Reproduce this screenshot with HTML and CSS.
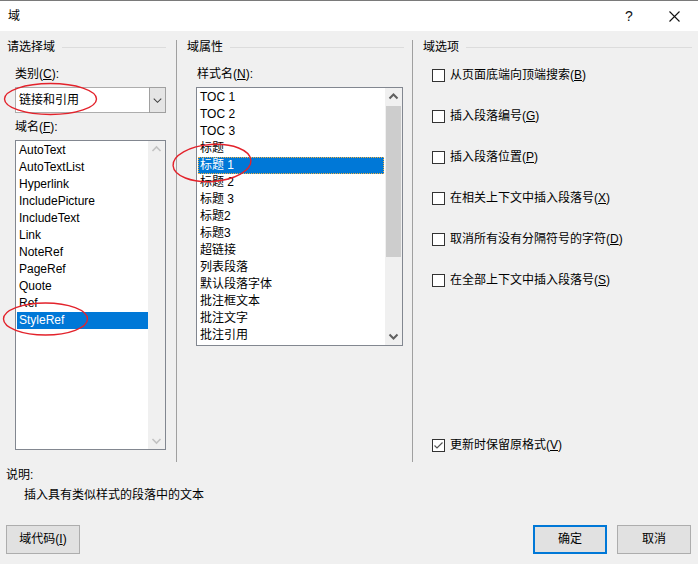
FILE: index.html
```html
<!DOCTYPE html>
<html lang="zh-CN">
<head>
<meta charset="utf-8">
<title>域</title>
<link rel="stylesheet" href="styles.css">
</head>
<body>
<div class="window">
  <div class="titlebar">
    <span class="title">域</span>
    <span class="help">?</span>
    <svg class="close" width="11" height="11" viewBox="0 0 11 11"><path d="M0.5 0.5 L10.5 10.5 M10.5 0.5 L0.5 10.5" stroke="#111" stroke-width="1.1" fill="none"/></svg>
  </div>

  <div class="main">
    <section class="col col-left">
      <div class="group-head"><span>请选择域</span><i class="rule"></i></div>
      <div class="inner-left">
        <div class="label first">类别(<u>C</u>):</div>
        <div class="combo">
          <span class="combo-text">链接和引用</span>
          <span class="combo-btn"><svg width="16" height="24" viewBox="0 0 16 24"><polyline points="4,10.5 8,14.5 12,10.5" fill="none" stroke="#404040" stroke-width="1.1"/></svg></span>
        </div>
        <div class="label second">域名(<u>F</u>):</div>
        <div class="listbox list-left">
          <div class="items">
            <div class="item">AutoText</div>
            <div class="item">AutoTextList</div>
            <div class="item">Hyperlink</div>
            <div class="item">IncludePicture</div>
            <div class="item">IncludeText</div>
            <div class="item">Link</div>
            <div class="item">NoteRef</div>
            <div class="item">PageRef</div>
            <div class="item">Quote</div>
            <div class="item">Ref</div>
            <div class="item selected">StyleRef</div>
          </div>
          <div class="scrollbar disabled">
            <span class="sb-btn"><svg width="17" height="17" viewBox="0 0 17 17"><polyline points="4.5,10 8.5,6 12.5,10" fill="none" stroke="#c2c2c2" stroke-width="1.6"/></svg></span>
            <span class="sb-track"></span>
            <span class="sb-btn"><svg width="17" height="17" viewBox="0 0 17 17"><polyline points="4.5,7 8.5,11 12.5,7" fill="none" stroke="#c2c2c2" stroke-width="1.6"/></svg></span>
          </div>
        </div>
      </div>
    </section>

    <section class="col col-mid">
      <div class="group-head"><span>域属性</span><i class="rule"></i></div>
      <div class="label first mid-label">样式名(<u>N</u>):</div>
      <div class="listbox list-mid">
        <div class="items">
          <div class="item">TOC 1</div>
          <div class="item">TOC 2</div>
          <div class="item">TOC 3</div>
          <div class="item">标题</div>
          <div class="item selected focus">标题 1</div>
          <div class="item">标题 2</div>
          <div class="item">标题 3</div>
          <div class="item">标题2</div>
          <div class="item">标题3</div>
          <div class="item">超链接</div>
          <div class="item">列表段落</div>
          <div class="item">默认段落字体</div>
          <div class="item">批注框文本</div>
          <div class="item">批注文字</div>
          <div class="item">批注引用</div>
        </div>
        <div class="scrollbar">
          <span class="sb-btn"><svg width="17" height="17" viewBox="0 0 17 17"><polyline points="4.5,10.5 8.5,6.5 12.5,10.5" fill="none" stroke="#606060" stroke-width="2"/></svg></span>
          <span class="sb-track"><span class="sb-thumb"></span></span>
          <span class="sb-btn"><svg width="17" height="17" viewBox="0 0 17 17"><polyline points="4.5,6.5 8.5,10.5 12.5,6.5" fill="none" stroke="#606060" stroke-width="2"/></svg></span>
        </div>
      </div>
    </section>

    <section class="col col-right">
      <div class="group-head"><span>域选项</span><i class="rule"></i></div>
      <div class="check first-check"><span class="box"></span><span>从页面底端向顶端搜索(<u>B</u>)</span></div>
      <div class="check"><span class="box"></span><span>插入段落编号(<u>G</u>)</span></div>
      <div class="check"><span class="box"></span><span>插入段落位置(<u>P</u>)</span></div>
      <div class="check"><span class="box"></span><span>在相关上下文中插入段落号(<u>X</u>)</span></div>
      <div class="check"><span class="box"></span><span>取消所有没有分隔符号的字符(<u>D</u>)</span></div>
      <div class="check"><span class="box"></span><span>在全部上下文中插入段落号(<u>S</u>)</span></div>
      <div class="check last-check"><span class="box checked"><svg width="11" height="11" viewBox="0 0 11 11"><polyline points="1.5,5.5 4,8 9.5,2.5" fill="none" stroke="#555" stroke-width="1.2"/></svg></span><span>更新时保留原格式(<u>V</u>)</span></div>
    </section>
  </div>

  <div class="desc">
    <div class="desc-title">说明:</div>
    <div class="desc-text">插入具有类似样式的段落中的文本</div>
  </div>

  <div class="buttons">
    <button class="btn">域代码(<u>I</u>)</button>
    <span class="spacer"></span>
    <button class="btn default">确定</button>
    <button class="btn">取消</button>
  </div>

  <svg class="marks" width="698" height="564" viewBox="0 0 698 564">
    <ellipse cx="50.5" cy="99" rx="46" ry="15.5" fill="none" stroke="#e3222b" stroke-width="1.4"/>
    <ellipse cx="45.5" cy="319" rx="42" ry="16" fill="none" stroke="#e3222b" stroke-width="1.4"/>
    <ellipse cx="212" cy="163" rx="39" ry="18.5" fill="none" stroke="#e3222b" stroke-width="1.4" transform="rotate(-4 212 163)"/>
  </svg>
</div>
</body>
</html>
```

FILE: styles.css
```css
* { box-sizing: border-box; }
html, body { margin: 0; padding: 0; background: #f0f0f0; }
body { overflow: hidden; }

.window {
  position: relative;
  width: 698px;
  height: 564px;
  background: #f0f0f0;
  color: #000;
  font-family: "Liberation Sans", "Noto Sans CJK SC", sans-serif;
  font-size: 12px;
  line-height: 17px;
}

.titlebar {
  height: 31px;
  background: #fff;
  border-top: 1px solid #7a7a7a;
  display: flex;
  align-items: center;
}
.title { margin-left: 8px; flex: 1; font-size: 12px; }
.help { width: 14px; text-align: center; font-size: 14px; margin-right: 33px; color: #111; }
.close { margin-right: 18px; }

.main {
  margin-top: 9px;
  height: 422px;
  display: grid;
  grid-template-columns: 176px 236px 286px;
}
.col { display: flex; flex-direction: column; }
.col-mid, .col-right { border-left: 1px solid #a0a0a0; }
.col-left { padding: 0 10px 0 7px; }
.col-mid { padding: 0 8px 0 10px; }
.col-right { padding: 0 6px 8px 10px; }

.group-head {
  height: 14px;
  line-height: 14px;
  display: flex;
  align-items: center;
  gap: 7px;
}
.rule { flex: 1; height: 1px; background: #dcdcdc; }

.inner-left { padding-left: 8px; }
.label.first { margin-top: 12px; }
.label.second { margin-top: 6px; }
.mid-label { margin-left: 10px; }

.combo {
  margin-top: 4px;
  width: 151px;
  height: 26px;
  background: #fff;
  border: 1px solid #adadad;
  display: flex;
  align-items: center;
}
.combo-text { flex: 1; padding-left: 3px; }
.combo-btn {
  width: 17px;
  height: 26px;
  margin: -1px -1px -1px 0;
  background: #e5e5e5;
  border: 1px solid #a0a0a0;
  display: flex;
  align-items: center;
  justify-content: center;
}

.listbox {
  background: #fff;
  border: 1px solid #828790;
  display: flex;
}
.list-left { margin-top: 4px; width: 151px; height: 310px; }
.list-mid { margin-top: 4px; margin-left: 9px; width: 207px; height: 259px; }

.items { flex: 1; padding: 1px 0 0 1px; overflow: hidden; }
.list-mid .items { padding-right: 1px; }
.item { height: 17px; line-height: 17px; padding-left: 2px; white-space: nowrap; }
.item.selected { background: #0078d7; color: #fff; }
.item.focus { border: 1px dotted #f0b040; padding-left: 1px; line-height: 15px; }

.scrollbar {
  width: 17px;
  background: #f0f0f0;
  display: flex;
  flex-direction: column;
}
.sb-btn { height: 17px; display: block; }
.sb-btn svg { display: block; }
.sb-track { flex: 1; padding: 1px 1px 0 1px; }
.sb-thumb { display: block; height: 151px; background: #cdcdcd; }

.check {
  height: 17px;
  display: flex;
  align-items: center;
  gap: 5px;
  margin-top: 24px;
  margin-left: 9px;
}
.check.first-check { margin-top: 13px; }
.check.last-check { margin-top: auto; }
.box {
  width: 13px;
  height: 13px;
  border: 1px solid #333;
  background: #fff;
  display: flex;
  align-items: center;
  justify-content: center;
}

.desc { margin-top: 5px; }
.desc-title { padding-left: 6px; }
.desc-text { padding-left: 24px; margin-top: 3px; }

.buttons {
  margin-top: 21px;
  display: flex;
  gap: 10px;
  padding: 0 7px 0 6px;
}
.spacer { flex: 1; }
.btn {
  width: 74px;
  height: 29px;
  background: #e1e1e1;
  border: 1px solid #adadad;
  font: inherit;
  color: #000;
  padding: 0;
}
.btn.default { border: 2px solid #0078d7; }

.marks { position: absolute; left: 0; top: 0; pointer-events: none; }
```
